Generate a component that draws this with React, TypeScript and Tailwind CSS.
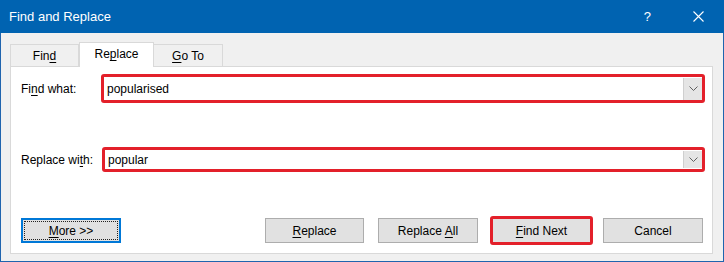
import React from 'react'

const font = { fontFamily: '"Segoe UI", "Liberation Sans", Arial, sans-serif' }

function Combo({ value, tall }: { value: string; tall?: boolean }) {
  return (
    <div
      className={
        'flex-1 flex items-center border-[3px] border-[#e3202a] rounded-[3px] bg-white ' +
        (tall ? 'h-[29px]' : 'h-[25px]')
      }
    >
      <span className="flex-1 pl-[3px] text-[12px] text-black leading-none">{value}</span>
      <div
        className={
          'w-[19px] flex items-center justify-center bg-[#e5e5e5] border-l border-[#cfcfcf] ' +
          (tall ? 'h-[22px]' : 'h-[17px]')
        }
      >
        <svg width="9" height="5" viewBox="0 0 9 5" fill="none">
          <path d="M0.5 0.5 L4.5 4.5 L8.5 0.5" stroke="#606060" strokeWidth="1" />
        </svg>
      </div>
    </div>
  )
}

function Btn({ children, className = '' }: { children: React.ReactNode; className?: string }) {
  return (
    <div
      className={
        'h-[25px] flex items-center justify-center bg-[#e1e1e1] border border-[#adadad] text-[12px] text-black ' +
        className
      }
    >
      {children}
    </div>
  )
}

export default function App() {
  return (
    <div className="w-[724px] h-[262px] flex flex-col bg-[#f0f0f0] select-none" style={font}>
      {/* Title bar */}
      <div className="h-[33px] shrink-0 flex items-center bg-[#0063b1] text-white">
        <span className="pl-[9px] flex-1 text-[13px]">Find and Replace</span>
        <span className="text-[13px] mr-[42px]">?</span>
        <svg width="11" height="11" viewBox="0 0 11 11" className="mr-[20px]">
          <path d="M0.5 0.5 L10.5 10.5 M10.5 0.5 L0.5 10.5" stroke="#ffffff" strokeWidth="1.1" />
        </svg>
      </div>

      {/* Body */}
      <div className="flex-1 flex flex-col border-x border-b border-[#1f64ae] pl-[9px] pr-[10px] pt-[8px]">
        {/* Tabs */}
        <div className="flex items-end h-[25px] text-[12px] text-black">
          <div className="w-[69px] h-[22px] flex items-center justify-center border border-b-0 border-[#d9d9d9] bg-[#f0f0f0]">
            Fin<span className="underline underline-offset-2">d</span>
          </div>
          <div className="w-[75px] h-[25px] -mb-px relative z-10 flex items-center justify-center border border-b-0 border-[#d9d9d9] bg-white pb-[2px]">
            Re<span className="underline underline-offset-2">p</span>lace
          </div>
          <div className="w-[69px] h-[22px] flex items-center justify-center border border-b-0 border-l-0 border-[#d9d9d9] bg-[#f0f0f0]">
            <span className="underline underline-offset-2">G</span>o To
          </div>
        </div>

        {/* Panel */}
        <div className="flex flex-col bg-white border border-[#d9d9d9] h-[188px] pl-[10px] pr-[7px] pt-[7px]">
          <div className="flex items-center text-[12px] text-black">
            <span className="w-[80px]">
              Fi<span className="underline underline-offset-2">n</span>d what:
            </span>
            <Combo value="popularised" tall />
          </div>

          <div className="flex items-center text-[12px] text-black mt-[44px]">
            <span className="w-[81px]">
              Replace wi<span className="underline underline-offset-2">t</span>h:
            </span>
            <Combo value="popular" />
          </div>

          <div className="flex items-center mt-[44px] pr-[2px]">
            <div className="w-[100px] h-[25px] p-[1px] border-2 border-[#0078d7] bg-[#e1e1e1]">
              <div className="w-full h-full flex items-center justify-center border border-dotted border-[#222] text-[12px] text-black">
                <span className="underline underline-offset-2">M</span>ore &gt;&gt;
              </div>
            </div>
            <div className="flex-1" />
            <Btn className="w-[99px]">
              <span className="underline underline-offset-2">R</span>eplace
            </Btn>
            <Btn className="w-[100px] ml-[14px]">
              Replace <span className="underline underline-offset-2 ml-[3px]">A</span>ll
            </Btn>
            <div className="w-[103px] h-[29px] ml-[12px] border-[3px] border-[#e3202a] rounded-[3px] bg-[#e1e1e1] flex items-center justify-center text-[12px] text-black">
              <span className="underline underline-offset-2">F</span>ind Next
            </div>
            <Btn className="w-[100px] ml-[10px]">Cancel</Btn>
          </div>
        </div>
      </div>
    </div>
  )
}
